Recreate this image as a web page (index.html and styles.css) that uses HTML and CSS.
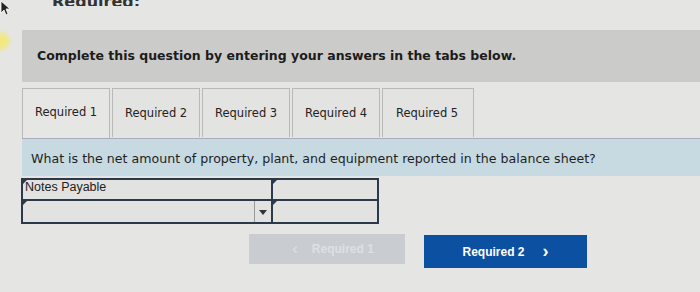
FILE: index.html
```html
<!DOCTYPE html>
<html>
<head>
<meta charset="utf-8">
<link rel="stylesheet" href="styles.css">
</head>
<body>
<div class="page">
  <div class="top-title"><span>Required:</span></div>
  <svg class="cursor" width="10" height="16" viewBox="0 0 10 16"><path d="M1 1 L1 13 L4 10 L6 15 L8 14 L6 9 L10 9 Z" fill="#222" stroke="#fff" stroke-width="0.8"/></svg>
  <div class="glow"></div>
  <div class="instructions">Complete this question by entering your answers in the tabs below.</div>
  <div class="tabs">
    <div class="tab active">Required 1</div>
    <div class="tab">Required 2</div>
    <div class="tab">Required 3</div>
    <div class="tab">Required 4</div>
    <div class="tab">Required 5</div>
  </div>
  <div class="question">What is the net amount of property, plant, and equipment reported in the balance sheet?</div>
  <div class="grid">
    <div class="cell label"><i class="mark"></i>Notes Payable</div>
    <div class="cell value"><i class="mark"></i></div>
    <div class="cell label select"><i class="mark"></i><span class="drop"><svg width="8" height="5" viewBox="0 0 8 5"><path d="M0 0 H8 L4 5 Z" fill="#333"/></svg></span></div>
    <div class="cell value"><i class="mark"></i></div>
  </div>
  <div class="nav">
    <div class="btn prev"><span class="chev">&lsaquo;</span>Required 1</div>
    <div class="btn next">Required 2<span class="chev">&rsaquo;</span></div>
  </div>
</div>
</body>
</html>
```

FILE: styles.css
```css
* { box-sizing: border-box; }
html, body { margin: 0; padding: 0; }
body {
  width: 700px;
  height: 292px;
  overflow: hidden;
  background: #e5e5e4;
  font-family: "DejaVu Sans", Verdana, sans-serif;
  color: #1e1e1e;
}
.page { position: relative; width: 700px; height: 292px; }
.top-title {
  height: 6px;
  overflow: hidden;
  padding-left: 52px;
  display: flex;
  align-items: flex-end;
}
.top-title span {
  font-weight: bold;
  font-size: 16px;
  line-height: 16px;
  margin-bottom: -4px;
  color: #333;
}
.cursor { position: absolute; left: 0; top: 0; }
.glow {
  position: absolute;
  left: -10px;
  top: 30px;
  width: 22px;
  height: 22px;
  border-radius: 50%;
  background: radial-gradient(circle, #f4ea6a 0%, rgba(244,234,106,0.6) 45%, rgba(244,234,106,0) 75%);
}
.instructions {
  margin: 24px 0 0 22px;
  height: 52px;
  background: #cbcbca;
  padding: 18px 0 0 15px;
  font-weight: bold;
  font-size: 12.5px;
  color: #1c1c1c;
}
.tabs {
  display: flex;
  gap: 2px;
  margin: 6px 0 0 22px;
  height: 50px;
}
.tab {
  width: 88px;
  height: 49px;
  border: 1px solid #b9b9b9;
  border-bottom: none;
  background: #e3e3e2;
  font-size: 11.5px;
  color: #222;
  padding: 17px 0 0 12px;
}
.tab:nth-child(5) { width: 92px; padding-left: 13px; }
.tab.active { background: #e6e6e5; height: 50px; padding-top: 16px; }
.question {
  margin-left: 22px;
  height: 38px;
  background: #c7d9e1;
  border-top: 1px solid #aab;
  padding: 12px 0 0 9px;
  font-size: 12.6px;
  color: #1f1f1f;
}
.grid {
  margin: 2px 0 0 21px;
  width: 358px;
  display: grid;
  grid-template-columns: 250px 1fr;
  border: 2px solid #2b3a4a;
  background: #e2e2e1;
}
.cell {
  position: relative;
  height: 21px;
  font-family: "Liberation Sans", Arial, sans-serif;
  font-size: 12.5px;
  line-height: 14px;
  padding: 0 0 0 2px;
  color: #222;
}
.cell.label { border-right: 2px solid #2b3a4a; }
.grid .cell:nth-child(1), .grid .cell:nth-child(2) { border-bottom: 2px solid #2b3a4a; }
.select { display: flex; justify-content: flex-end; padding: 0; }
.drop {
  width: 17px;
  height: 100%;
  border-left: 1px solid #9a9a9a;
  display: flex;
  align-items: center;
  justify-content: center;
  padding-top: 2px;
}
.mark {
  position: absolute;
  left: 0;
  top: 0;
  width: 0;
  height: 0;
  border-top: 4px solid #2b3a4a;
  border-right: 4px solid transparent;
}
.nav {
  display: flex;
  gap: 19px;
  margin: 10px 0 0 249px;
}
.btn {
  height: 30px;
  display: flex;
  align-items: center;
  justify-content: center;
  font-family: "Liberation Sans", Arial, sans-serif;
  font-weight: bold;
  font-size: 12px;
}
.prev {
  width: 156px;
  background: #c9cdd2;
  color: #dde0e4;
  padding-left: 12px;
}
.prev .chev { margin-right: 14px; font-size: 17px; font-weight: normal; }
.next {
  width: 163px;
  height: 33px;
  margin-top: 1px;
  background: #0c50a2;
  color: #fff;
  padding-left: 0;
}
.next .chev { margin-left: 18px; font-size: 18px; }
```
